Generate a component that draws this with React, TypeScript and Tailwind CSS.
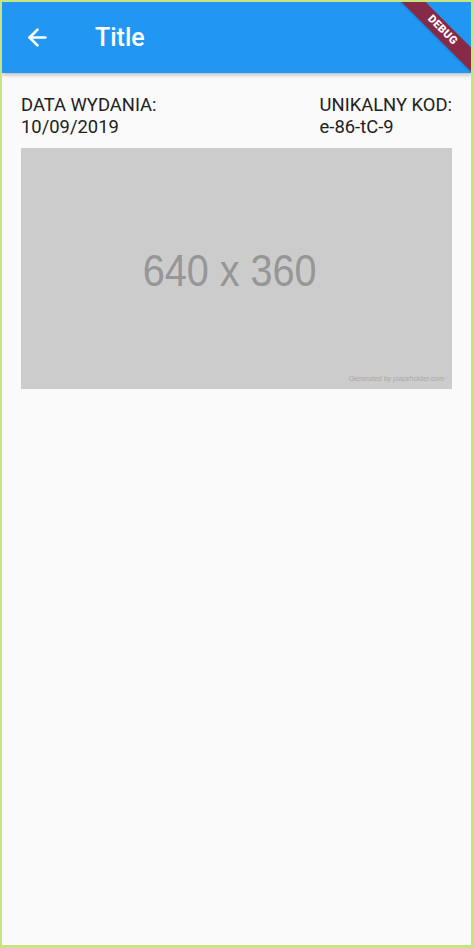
import { ArrowLeft } from "lucide-react";

function DebugBanner() {
    return (
        <div className="pointer-events-none absolute right-0 top-0 z-20 h-[80px] w-[80px] overflow-hidden">
            <div className="absolute right-[-36px] top-[20px] flex h-[17px] w-[130px] rotate-45 items-center justify-center bg-[#872a48] shadow-sm">
                <span className="font-['Roboto',sans-serif] text-[11px] font-black tracking-wide text-white">DEBUG</span>
            </div>
        </div>
    );
}

function Placeholder() {
    return (
        <div className="relative flex h-[241px] w-full items-center justify-center bg-[#cccccc]">
            <span className="mr-[14px] mt-[5px] font-['Liberation_Sans',Arial,sans-serif] text-[44px] text-[#969696] [transform:scaleX(0.9)]">640 x 360</span>
            <span className="absolute bottom-[5px] right-[8px] font-['Liberation_Sans',Arial,sans-serif] text-[7px] text-[#a8a8a8]">
                Generated by placeholder.com
            </span>
        </div>
    );
}

export default function App() {
    return (
        <div className="flex h-[948px] w-[474px] flex-col bg-[#c8e482] pb-[3px] pl-[2px] pr-[3px] pt-[2px] font-['Roboto',sans-serif]">
            <div className="relative flex flex-1 flex-col overflow-hidden bg-[#fafafa]">
                <header className="z-10 flex h-[71px] shrink-0 items-center bg-[#2196f3] pl-[22px] shadow-[0_2px_4px_rgba(0,0,0,0.25)]">
                    <ArrowLeft className="h-[27px] w-[27px] text-white" strokeWidth={2.4} />
                    <h1 className="ml-[44px] text-[25px] font-medium text-white">Title</h1>
                </header>

                <main className="px-[19px] pt-[21px]">
                    <div className="flex justify-between text-[18.4px] leading-[22px] text-[#212121]">
                        <div>
                            <div>DATA WYDANIA:</div>
                            <div>10/09/2019</div>
                        </div>
                        <div>
                            <div>UNIKALNY KOD:</div>
                            <div>e-86-tC-9</div>
                        </div>
                    </div>
                    <div className="mt-[10px]">
                        <Placeholder />
                    </div>
                </main>

                <DebugBanner />
            </div>
        </div>
    );
}
